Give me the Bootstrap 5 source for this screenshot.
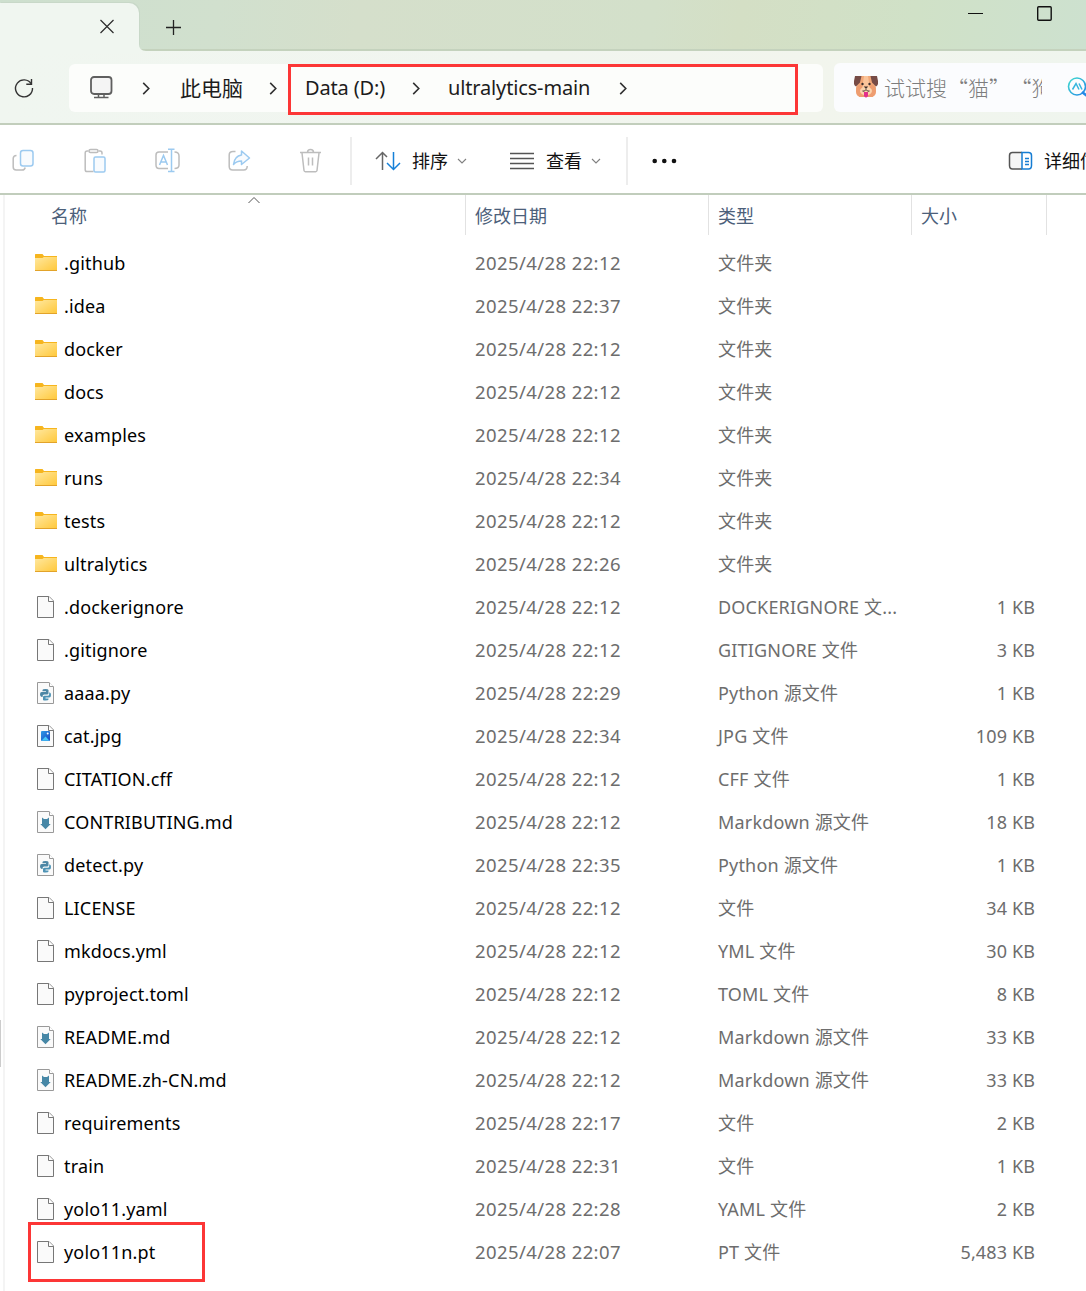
<!DOCTYPE html>
<html lang="zh-CN">
<head>
<meta charset="utf-8">
<meta name="viewport" content="width=device-width, initial-scale=1">
<title>ultralytics-main</title>
<link href="https://cdn.jsdelivr.net/npm/bootstrap@5.3.0/dist/css/bootstrap.min.css" rel="stylesheet">
<style>
body{font-family:"Noto Sans","Noto Sans CJK SC",sans-serif;font-size:18px;line-height:24px;color:#111;background:#fff}
.window{width:1086px;height:1291px}
svg{display:block;flex:none}
.titlebar{height:51px;background:linear-gradient(97deg,#cddfce 0,#d1e0ce 20%,#d5dfcb 33%,#d3e0ca 60%,#d4dfc5 68%,#d0e1c7 84%,#cde1cf 100%);border-bottom:2px solid #c4d2bd}
.tab-active{width:139px;height:48px;margin-top:3px;background:#f0f6f0;border-top-right-radius:10px;box-shadow:1px -1px 0 #c8d8c8,0 2px 0 #f0f6f0}
.addressbar{height:74px;background:linear-gradient(90deg,#f0f6f0,#f1f5ef 50%,#f2f5ed 75%,#eff5ee);border-bottom:2px solid #c2cebc}
.reload{margin-left:13px;margin-top:2px}
.path-field{width:754px;height:48px;margin-left:32px;margin-top:2px;border-radius:6px;background:#fcfdfb;font-size:20px;color:#1c1c1c}
.path-zh{width:63px;margin-left:1px;font-size:21px}
.path-drive{width:81px;letter-spacing:-.15px}
.path-dir{width:142px;letter-spacing:-.15px}
.sep{width:61px;padding-right:1px}.sep-mid{width:62px;padding-right:2px}.sep-first{width:66px}.sep-wide{width:65px}
.search-field{width:252px;height:49px;margin-left:11px;border-radius:6px 0 0 6px;background:#fbfcfe;color:#7d7d7d}
.hint{width:158px;margin-left:6px;flex:none;font-family:"Noto Sans CJK SC",sans-serif;font-size:21px;font-weight:300}
.hint-next{margin-left:11px}
.search-mark{margin-left:21px}
.toolbar{height:70px;padding-top:4px;border-bottom:2px solid #c1cdbc}
.tool{width:72px}
.tool-label{width:36px;white-space:nowrap}
.rule{width:2px;height:48px;background:#ededed}
.rule-first{margin-left:24px}
.rule-next{margin-left:25px}
.sort-icon{margin-left:23px}
.sort-label{margin-left:11px}
.caret-down{margin-left:9px}
.lines{margin-left:43px}
.look{margin-left:12px}
.detail{width:42px;margin-left:11px}
.files{padding-left:5px}
.pane-edge{width:2px;height:1096px;left:3px;top:0;background:#f4f4f4}
.scroll-thumb{width:1px;height:47px;left:0;top:825px;background:#ccc}
.head-row{height:40px;margin-bottom:6px;color:#4c607a}
.head-row>div{padding-top:1px}
.file-row{height:43px;color:#6d6d6d}
.c-name{width:460px;padding-left:30px}
.c-date{width:243px;padding-left:10px}
.c-type{width:203px;padding-left:10px}
.c-size{width:135px;padding:0 11px 0 10px}
.head-row>div{border-right:1px solid #e2e2e2}
.head-row .c-name{width:461px;padding-left:46px}
.head-row .c-date,.head-row .c-type,.head-row .c-size{padding-left:9px}
.glyph{width:22px;height:24px;margin-right:7px}
.f-name{color:#000;letter-spacing:.17px}
.file-row .c-date{font-size:18.5px;letter-spacing:.4px}
.file-row .c-type{letter-spacing:.18px}
.file-row .c-size{letter-spacing:.12px}
.sort-mark{left:243px;top:1px}
.frame-red{border:3px solid #fc3636;pointer-events:none}
.frame-path{left:288px;top:64px;width:510px;height:51px}
.frame-file{left:28px;top:1222px;width:177px;height:60px}
</style>
<script src="https://cdn.jsdelivr.net/npm/bootstrap@5.3.0/dist/js/bootstrap.bundle.min.js"></script>
</head>
<body class="overflow-hidden">
<svg width="0" height="0" class="position-absolute">
<defs>
<linearGradient id="gf" x1="0" y1="0" x2="1" y2="1"><stop offset="0" stop-color="#ffe8a0"/><stop offset="1" stop-color="#ffc83a"/></linearGradient>
<linearGradient id="gi" x1="0" y1="0" x2="1" y2="1"><stop offset="0" stop-color="#2f9be8"/><stop offset="1" stop-color="#1746c0"/></linearGradient>
<linearGradient id="gs" x1="0" y1="0" x2="1" y2="1"><stop offset="0" stop-color="#43dccf"/><stop offset="1" stop-color="#2388e6"/></linearGradient>
<symbol id="folder" viewBox="0 0 22 24"><path d="M0 3.500Q0 3 .6 3H7.500l1.500 2H22v3H0z" fill="#f6b51e"/><path d="M0 7H7.500l1.200-1H22V19.500H0z" fill="url(#gf)"/><path d="M0 19.500h22" stroke="#e2a32a"/></symbol>
<symbol id="page" viewBox="0 0 22 24"><path d="M2.500 1.500H14l4.500 4.500V22.500h-16z" fill="#fafafa" stroke="#777"/><path d="M13.500 1.500V6.500h5" fill="#fff" stroke="#777"/></symbol>
<symbol id="page2" viewBox="0 0 22 24"><path d="M2.500 1.500H14l4.500 4.500V22.500h-16z" fill="#fafafa" stroke="#999"/><path d="M14.500 1.500V5.500h4" fill="#fff" stroke="#999"/></symbol>
<symbol id="py" viewBox="0 0 22 24"><use href="#page2"/><path d="M7.500 10.200V9q0-1 3-1t3 1v3.200q0 1.300-1.500 1.300H9.200q-1.600 0-1.600 1.600V16H6.700Q5 16 5 13.200 5 11 6.700 11H11v-.8z" fill="#4d87a5"/><path d="M13.500 17.400v1q0 1.100-3 1.100t-2.500-1.100v-2.200q0-1.400 1.500-1.400h3q1.700 0 1.700-1.600V11.500h.6q1.200 0 1.200 2.500 0 2.500-1.700 2.500H10.500v.9z" fill="#4d93b5"/></symbol>
<symbol id="md" viewBox="0 0 22 24"><use href="#page2"/><path d="M7 7.500l2 1.500h3l2-1.500v6.500h1.700l-5.200 5.300-5.200-5.300H7z" fill="#4687a6"/></symbol>
<symbol id="jpg" viewBox="0 0 22 24"><use href="#page"/><rect x="6" y="7" width="9" height="10" rx="1" fill="url(#gi)"/><path d="M6.500 16.800l4-4.300 4 4.300z" fill="#48c7f8"/><circle cx="12.700" cy="9.400" r="1" fill="#fff"/></symbol>
<symbol id="chev" viewBox="0 0 8 14"><path d="M1 1l6 6-6 6" fill="none" stroke="#303030" stroke-width="1.700"/></symbol>
<symbol id="down" viewBox="0 0 10 6"><path d="M1 1l4 4 4-4" fill="none" stroke="#808080" stroke-width="1.100"/></symbol>
</defs>
</svg>
<main class="window position-relative overflow-hidden">
  <header class="titlebar d-flex">
    <div class="tab-active d-flex justify-content-end pe-4">
      <svg class="mt-3" width="16" height="16" viewBox="0 0 16 16"><path d="M1.500 1l13 13m0-13l-13 13" stroke="#2c2c2c" stroke-width="1.200"/></svg>
    </div>
    <svg class="overflow-visible" width="68" height="49" viewBox="0 0 68 49"><path d="M0 44q0 7 7 7H0z" fill="#f0f6f0"/><path d="M27 27.500h15M34.500 20v15" stroke="#222" stroke-width="1.300"/></svg>
    <svg class="ms-auto" width="128" height="40" viewBox="0 0 128 40"><path d="M10 13.500h15" stroke="#111"/><rect x="79.700" y="6.700" width="13.500" height="13.500" rx="1" fill="none" stroke="#111" stroke-width="1.400"/></svg>
  </header>
  <nav class="addressbar d-flex align-items-center">
    <svg class="reload" width="24" height="22" viewBox="0 0 24 22"><path d="M18.300 7A8.500 8.500 0 1 0 19.500 11" fill="none" stroke="#333" stroke-width="1.400"/><path d="M18.500 2v5.200h-5.200" fill="none" stroke="#333" stroke-width="1.400"/></svg>
    <div class="path-field d-flex align-items-center ps-3">
      <svg class="ms-1" width="24" height="26" viewBox="0 0 24 26"><rect x="2" y="2" width="20.500" height="17" rx="3" fill="#f4f4f4" stroke="#5f5f5f" stroke-width="1.800"/><path d="M9.500 19v3.500m5.500-3.500v3.500M5 22.500h14.500" stroke="#5f5f5f" stroke-width="1.500"/></svg>
      <div class="sep-first d-flex justify-content-center"><svg width="8" height="13"><use href="#chev"/></svg></div>
      <div class="path-zh text-nowrap">此电脑</div>
      <div class="sep-mid d-flex justify-content-center"><svg width="8" height="13"><use href="#chev"/></svg></div>
      <div class="path-drive text-nowrap">Data (D:)</div>
      <div class="sep-mid d-flex justify-content-center"><svg width="8" height="13"><use href="#chev"/></svg></div>
      <div class="path-dir text-nowrap">ultralytics-main</div>
      <div class="sep-wide d-flex justify-content-center"><svg width="8" height="13"><use href="#chev"/></svg></div>
    </div>
    <div class="search-field d-flex align-items-center ps-3 overflow-hidden">
      <svg class="ms-1" width="24" height="24" viewBox="0 0 24 24"><path d="M5 1h14l3 12-3 9H5l-3-9z" fill="#f0a778"/><rect x="2" y="10" width="20" height="12" rx="5" fill="#ee9d70"/><path d="M1 1h6.500L6 7.500 2 11.500Q-.8 10 0 6zM23 1h-6.500L18 7.500l4 4Q24.800 10 24 6z" fill="#764b46"/><path d="M10 1h4l2 13H8z" fill="#fbc49a"/><ellipse cx="12" cy="16" rx="6" ry="4.200" fill="#fbd3ac"/><circle cx="8.500" cy="9" r="1.200" fill="#3c2e2b"/><circle cx="15.500" cy="9" r="1.200" fill="#3c2e2b"/><path d="M9.800 11.500h4.400L12 14z" fill="#3c2e2b"/><path d="M8.500 16q2 1 3.500-1.500 1.500 2.500 3.500 1.500" fill="none" stroke="#3c2e2b"/><path d="M10 17h4v4q-2 3-4 0z" fill="#e2308c"/></svg>
      <div class="hint text-nowrap overflow-hidden">试试搜“猫”<span class="hint-next">“狗</span></div>
      <svg width="24" height="24" viewBox="0 0 24 24" class="search-mark"><circle cx="14" cy="11.500" r="8.500" fill="none" stroke="url(#gs)" stroke-width="1.600"/><path d="M9.500 14.500l3.500-6 3 6m0-6l3 6" fill="none" stroke="#35b5dd" stroke-width="1.500"/><path d="M19 17l5 4" stroke="#2388e6" stroke-width="2.500"/></svg>
    </div>
  </nav>
  <div class="toolbar d-flex align-items-center">
    <div class="tool ps-2"><svg class="ms-1" width="24" height="26" viewBox="0 0 24 26" fill="none" stroke-width="1.500"><path d="M4.500 7.500Q1.200 7.500 1.200 10.500V19q0 3 3 3h6q2.500 0 3-2.500" stroke="#bdbdbd"/><rect x="8.500" y="2.500" width="12.500" height="15.500" rx="2.500" stroke="#9ccaf0" fill="#f8fbfe"/></svg></div>
    <div class="tool ps-2"><svg class="ms-1" width="26" height="26" viewBox="0 0 26 26" fill="none" stroke-width="1.500"><path d="M9.500 23.500H3q-1.800 0-1.800-1.800V5q0-2 2-2H4.500m10 0h1.500q2 0 2 2v1.500" stroke="#bdbdbd"/><rect x="5" y="1.500" width="9" height="3" rx="1.500" stroke="#bdbdbd"/><rect x="10" y="9" width="11" height="15" rx="1.500" stroke="#9ccaf0" fill="#f8fbfe"/></svg></div>
    <div class="tool ps-2"><svg class="ms-1 overflow-visible" width="26" height="26" viewBox="1 0 26 26" fill="none" stroke-width="1.500"><path d="M13 4H4Q1 4 1 7v10q0 3.500 3 3.500h9M19.500 4Q24 4 24 8v9q0 3.500-4.500 3.500" stroke="#bdbdbd"/><path d="M4.500 17L8.500 7.500l4 9.500M6 14h5M13 1.200h6.500M13 23.500h6.500M16.500 1.500v22" stroke="#9ccaf0"/></svg></div>
    <div class="tool ps-2"><svg class="ms-1" width="26" height="26" viewBox="0.5 0 26 26" fill="none" stroke-width="1.500"><path d="M8 3.500H5.500Q1.700 3.500 1.700 7v11.500q0 3.500 3.500 3.500h11q3.500 0 3.500-4" stroke="#bdbdbd"/><path d="M14 3l8 7-8 6.500V13q-5 0-8 3.500 1-8.500 8-9.500z" stroke="#9ccaf0" stroke-linejoin="round" fill="#f8fbfe"/></svg></div>
    <div class="ps-2"><svg class="ms-1" width="26" height="26" viewBox="0 0 26 26" fill="none" stroke-width="1.500" stroke="#bdbdbd"><path d="M0 4.500h21M2 5l2 17.500q.2 1.200 1.300 1.200h10.400q1.100 0 1.300-1.200L19 5M7.500 4.500q0-3 3-3t3 3M8.500 9.500v8M12.500 9.500v8"/></svg></div>
    <div class="rule rule-first"></div>
    <svg class="sort-icon" width="26" height="22" viewBox="0 0 26 22" fill="none" stroke-width="1.500"><path d="M7.500 20V3M1 9l6.500-6.500L12 7" stroke="#666"/><path d="M18.500 2v17.500M12 13l6.500 6.500L25 13" stroke="#1580d8"/></svg>
    <div class="tool-label sort-label">排序</div>
    <svg class="caret-down" width="10" height="6"><use href="#down"/></svg>
    <svg class="lines" width="24" height="18" viewBox="0 0 24 18"><path d="M0 1.500h24M0 6.500h24M0 11.500h24M0 16.500h24" stroke="#555" stroke-width="1.300"/></svg>
    <div class="tool-label look">查看</div>
    <svg class="caret-down" width="10" height="6"><use href="#down"/></svg>
    <div class="rule rule-next"></div>
    <svg class="ms-4" width="26" height="6" viewBox="0 0 26 6" fill="#111"><circle cx="2.700" cy="3" r="2.300"/><circle cx="12.300" cy="3" r="2.300"/><circle cx="22" cy="3" r="2.300"/></svg>
    <svg class="ms-auto" width="25" height="20" viewBox="0 0 25 20" fill="none" stroke-width="1.500"><path d="M14 1.500H4.500Q1.500 1.500 1.500 4.500v10q0 3.500 3 3.500H14" fill="#f6f6f6" stroke="#555"/><path d="M14 1.500h6.500q3 0 3 3v10q0 3.500-3 3.500H14zM17 7.500h4M17 10.500h4M17 13.500h4" stroke="#167dd3"/></svg>
    <div class="tool-label detail">详细信息</div>
  </div>
  <section class="files position-relative">
    <div class="pane-edge position-absolute"></div><div class="scroll-thumb position-absolute"></div>
    <div class="head-row d-flex">
      <div class="c-name d-flex align-items-center position-relative">名称<svg class="sort-mark position-absolute" width="12" height="8" viewBox="0 0 12 8"><path d="M.500 7L6 1.500 11.500 7" fill="none" stroke="#555"/></svg></div>
      <div class="c-date d-flex align-items-center">修改日期</div><div class="c-type d-flex align-items-center">类型</div><div class="c-size d-flex align-items-center">大小</div>
    </div>
    <div id="rows"></div>
  </section>
  <div class="frame-red frame-path position-absolute"></div>
  <div class="frame-red frame-file position-absolute"></div>
</main>
<script>
const files = [
 ['folder','.github','22:12','文件夹',''],['folder','.idea','22:37','文件夹',''],['folder','docker','22:12','文件夹',''],
 ['folder','docs','22:12','文件夹',''],['folder','examples','22:12','文件夹',''],['folder','runs','22:34','文件夹',''],
 ['folder','tests','22:12','文件夹',''],['folder','ultralytics','22:26','文件夹',''],
 ['page','.dockerignore','22:12','DOCKERIGNORE 文...','1 KB'],['page','.gitignore','22:12','GITIGNORE 文件','3 KB'],
 ['py','aaaa.py','22:29','Python 源文件','1 KB'],['jpg','cat.jpg','22:34','JPG 文件','109 KB'],
 ['page','CITATION.cff','22:12','CFF 文件','1 KB'],['md','CONTRIBUTING.md','22:12','Markdown 源文件','18 KB'],
 ['py','detect.py','22:35','Python 源文件','1 KB'],['page','LICENSE','22:12','文件','34 KB'],
 ['page','mkdocs.yml','22:12','YML 文件','30 KB'],['page','pyproject.toml','22:12','TOML 文件','8 KB'],
 ['md','README.md','22:12','Markdown 源文件','33 KB'],['md','README.zh-CN.md','22:12','Markdown 源文件','33 KB'],
 ['page','requirements','22:17','文件','2 KB'],['page','train','22:31','文件','1 KB'],
 ['page','yolo11.yaml','22:28','YAML 文件','2 KB'],['page','yolo11n.pt','22:07','PT 文件','5,483 KB']
];
document.getElementById('rows').innerHTML = files.map(([icon,name,time,type,size]) => `
<div class="file-row d-flex align-items-center text-nowrap">
<div class="c-name d-flex align-items-center"><svg class="glyph"><use href="#${icon}"/></svg><span class="f-name">${name}</span></div>
<div class="c-date">2025/4/28 ${time}</div><div class="c-type">${type}</div><div class="c-size text-end">${size}</div></div>`).join('');
</script>
</body>
</html>
